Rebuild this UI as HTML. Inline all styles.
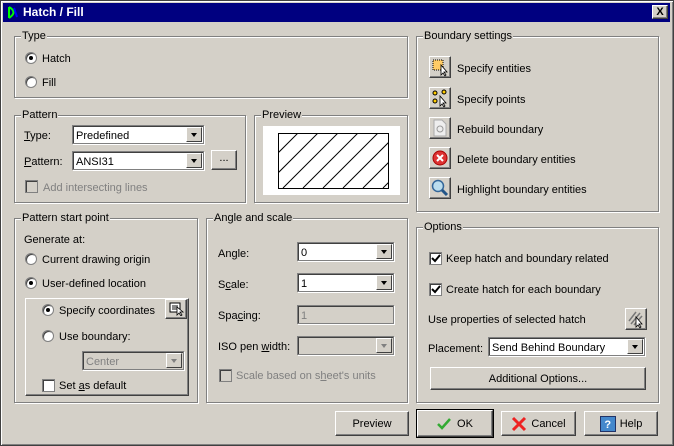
<!DOCTYPE html>
<html><head><meta charset="utf-8"><style>
*{box-sizing:border-box;margin:0;padding:0}
body{width:674px;height:446px;background:#d4d0c8;font:11px "Liberation Sans",sans-serif;color:#000;position:relative;overflow:hidden}
.a{position:absolute;white-space:nowrap}
span.a{margin-top:2px}
.win{position:absolute;left:0;top:0;width:674px;height:446px;border:1px solid #404040;box-shadow:inset 1px 1px #fff,inset -1px -1px #808080}
.title{position:absolute;left:3px;top:3px;width:667px;height:19px;background:#000080;color:#fff;font-weight:bold;font-size:12px}
.title span.a{margin-top:0}
.gb{position:absolute;border:1px solid #808080;box-shadow:inset 1px 1px #fff,1px 1px #fff}
.gb>span{position:absolute;top:-8px;left:6px;background:#d4d0c8;padding:0 1px;line-height:14px}
.radio{position:absolute;width:12px;height:12px;border-radius:50%;background:#fff;border:1px solid #808080;box-shadow:inset 1px 1px #404040}
.radio.on::after{content:"";position:absolute;left:3px;top:3px;width:4px;height:4px;border-radius:50%;background:#000}
.chk{position:absolute;width:13px;height:13px;background:#fff;border:1px solid #808080;box-shadow:inset 1px 1px #404040}
.chk.dis{background:#d4d0c8}
.combo{position:absolute;height:19px;background:#fff;border:1px solid #808080;box-shadow:inset 1px 1px #404040,1px 1px #fff;padding:3px 0 0 3px;line-height:14px}
.combo.dis{background:#d4d0c8;color:#808080}
.combo .arr{position:absolute;right:1px;top:1px;width:16px;height:15px;background:#d4d0c8;border:1px solid;border-color:#fff #404040 #404040 #fff}
.combo .arr::after{content:"";position:absolute;left:4px;top:5px;border:3px solid transparent;border-top:4px solid #000;border-bottom:0}
.combo.dis .arr::after{border-top-color:#808080}
.btn{position:absolute;background:#d4d0c8;border:1px solid;border-color:#fff #404040 #404040 #fff;box-shadow:inset -1px -1px #808080;text-align:center}
.gray{color:#808080}
</style></head><body>
<div class="win"></div>
<div class="title">
 <svg class="a" style="left:3px;top:2px" width="14" height="15"><path d="M3 2 L3 13 M3 2 Q12 7 3 13" stroke="#0f0" stroke-width="2" fill="none"/><path d="M8 3 L11 12" stroke="#00f" stroke-width="2"/></svg>
 <span class="a" style="left:20px;top:2px">Hatch / Fill</span>
 <div class="btn" style="left:649px;top:2px;width:16px;height:14px;color:#000;font-size:11px;line-height:12px">X</div>
</div>

<div class="gb" style="left:14px;top:36px;width:394px;height:62px"><span>Type</span></div>
<div class="radio on" style="left:25px;top:52px"></div><span class="a" style="left:42px;top:51px">Hatch</span>
<div class="radio" style="left:25px;top:76px"></div><span class="a" style="left:42px;top:75px">Fill</span>

<div class="gb" style="left:14px;top:115px;width:232px;height:88px"><span>Pattern</span></div>
<span class="a" style="left:24px;top:128px"><u>T</u>ype:</span>
<div class="combo" style="left:72px;top:125px;width:132px">Predefined<div class="arr"></div></div>
<span class="a" style="left:24px;top:154px"><u>P</u>attern:</span>
<div class="combo" style="left:72px;top:151px;width:132px">ANSI31<div class="arr"></div></div>
<div class="btn" style="left:211px;top:150px;width:26px;height:20px;line-height:15px">...</div>
<div class="chk dis" style="left:25px;top:180px"></div><span class="a gray" style="left:43px;top:180px">Add intersecting lines</span>

<div class="gb" style="left:254px;top:115px;width:154px;height:88px"><span>Preview</span></div>
<svg class="a" style="left:263px;top:126px" width="137" height="69"><rect width="137" height="69" fill="#fff"/>
<g stroke="#000" stroke-width="1" fill="none"><rect x="15.5" y="7.5" width="110" height="55"/>
<clipPath id="c"><rect x="16" y="8" width="109" height="54"/></clipPath>
<g clip-path="url(#c)"><path d="M0 62 L55 7 M20 62 L75 7 M40 62 L95 7 M60 62 L115 7 M80 62 L135 7 M100 62 L155 7 M120 62 L175 7 M-20 62 L35 7"/></g></g></svg>

<div class="gb" style="left:14px;top:218px;width:184px;height:185px"><span>Pattern start point</span></div>
<span class="a" style="left:24px;top:232px">Generate at:</span>
<div class="radio" style="left:25px;top:253px"></div><span class="a" style="left:42px;top:252px">Current drawing origin</span>
<div class="radio on" style="left:25px;top:277px"></div><span class="a" style="left:42px;top:276px">User-defined location</span>
<div class="a" style="left:25px;top:298px;width:164px;height:98px;border:1px solid;border-color:#fff #404040 #404040 #fff;box-shadow:inset -1px -1px #808080"></div>
<div class="radio on" style="left:42px;top:304px"></div><span class="a" style="left:59px;top:303px">Specify coordinates</span>
<div class="btn" style="left:165px;top:299px;width:22px;height:20px"><svg width="18" height="16"><rect x="3" y="3" width="10" height="9" fill="#fff" stroke="#000"/><rect x="5" y="5" width="6" height="5" fill="#888"/><path d="M10 7 L10 15 L12 13 L14 16 L15 15 L13 12 L16 12 Z" fill="#fff" stroke="#000" stroke-width=".8"/></svg></div>
<div class="radio" style="left:42px;top:330px"></div><span class="a" style="left:59px;top:329px">Use boundary:</span>
<div class="combo dis" style="left:82px;top:351px;width:102px">Center<div class="arr"></div></div>
<div class="chk" style="left:42px;top:379px"></div><span class="a" style="left:59px;top:378px">Set <u>a</u>s default</span>

<div class="gb" style="left:206px;top:218px;width:202px;height:185px"><span>Angle and scale</span></div>
<span class="a" style="left:218px;top:246px">An<u>g</u>le:</span>
<div class="combo" style="left:297px;top:242px;width:97px">0<div class="arr"></div></div>
<span class="a" style="left:218px;top:277px">S<u>c</u>ale:</span>
<div class="combo" style="left:297px;top:273px;width:97px">1<div class="arr"></div></div>
<span class="a" style="left:218px;top:308px">Spa<u>c</u>ing:</span>
<div class="combo dis" style="left:297px;top:305px;width:97px">1</div>
<span class="a" style="left:218px;top:339px">ISO pen <u>w</u>idth:</span>
<div class="combo dis" style="left:297px;top:336px;width:97px"><div class="arr"></div></div>
<div class="chk dis" style="left:219px;top:369px"></div><span class="a gray" style="left:236px;top:368px">Scale based on s<u>h</u>eet's units</span>

<div class="gb" style="left:416px;top:36px;width:243px;height:176px"><span>Boundary settings</span></div>
<div class="btn" style="left:429px;top:56px;width:22px;height:22px"><svg width="20" height="20"><rect x="3" y="3" width="10" height="10" fill="#fc6" stroke="#000" stroke-dasharray="1 1"/><path d="M11 8 L11 18 L13 16 L15 19 L16 18 L14 15 L17 15 Z" fill="#fff" stroke="#000" stroke-width=".8"/></svg></div>
<span class="a" style="left:457px;top:61px">Specify entities</span>
<div class="btn" style="left:429px;top:87px;width:22px;height:22px"><svg width="20" height="20"><circle cx="5" cy="5" r="2" fill="#fc0" stroke="#000"/><circle cx="14" cy="4" r="2" fill="#fc0" stroke="#000"/><circle cx="5" cy="13" r="2" fill="#fc0" stroke="#000"/><path d="M10 8 L10 18 L12 16 L14 19 L15 18 L13 15 L16 15 Z" fill="#fff" stroke="#000" stroke-width=".8"/></svg></div>
<span class="a" style="left:457px;top:92px">Specify points</span>
<div class="btn" style="left:429px;top:117px;width:22px;height:22px"><svg width="20" height="20"><path d="M4 2 L12 2 L16 6 L16 18 L4 18 Z" fill="#eee" stroke="#aaa"/><circle cx="10" cy="11" r="3" fill="none" stroke="#999"/></svg></div>
<span class="a" style="left:457px;top:122px">Rebuild boundary</span>
<div class="btn" style="left:429px;top:147px;width:22px;height:22px"><svg width="20" height="20"><circle cx="10" cy="10" r="7" fill="#d33" stroke="#a00"/><path d="M7 7 L13 13 M13 7 L7 13" stroke="#fff" stroke-width="2"/></svg></div>
<span class="a" style="left:457px;top:152px">Delete boundary entities</span>
<div class="btn" style="left:429px;top:177px;width:22px;height:22px"><svg width="20" height="20"><circle cx="8" cy="8" r="5.5" fill="#bde" stroke="#369" stroke-width="1.5"/><path d="M12 12 L17 17" stroke="#258" stroke-width="3"/></svg></div>
<span class="a" style="left:457px;top:182px">Highlight boundary entities</span>

<div class="gb" style="left:416px;top:227px;width:243px;height:176px"><span>Options</span></div>
<div class="chk" style="left:429px;top:252px"><svg class="a" style="left:1px;top:1px" width="10" height="10"><path d="M1 4 L4 7 L9 1" stroke="#000" stroke-width="2" fill="none"/></svg></div>
<span class="a" style="left:446px;top:251px">Keep hatch and boundary related</span>
<div class="chk" style="left:429px;top:283px"><svg class="a" style="left:1px;top:1px" width="10" height="10"><path d="M1 4 L4 7 L9 1" stroke="#000" stroke-width="2" fill="none"/></svg></div>
<span class="a" style="left:446px;top:282px">Create hatch for each boundary</span>
<span class="a" style="left:428px;top:312px">Use properties of selected hatch</span>
<div class="btn" style="left:625px;top:308px;width:22px;height:22px"><svg width="20" height="20"><path d="M3 12 L10 3 M5 15 L14 4 M8 16 L16 7" stroke="#777" stroke-width="1.5"/><path d="M10 8 L10 18 L12 16 L14 19 L15 18 L13 15 L16 15 Z" fill="#fff" stroke="#000" stroke-width=".8"/></svg></div>
<span class="a" style="left:428px;top:341px">Placement:</span>
<div class="combo" style="left:488px;top:337px;width:157px">Send Behind Boundary<div class="arr"></div></div>
<div class="btn" style="left:430px;top:367px;width:216px;height:23px;line-height:22px">Additional Options...</div>

<div class="btn" style="left:335px;top:411px;width:74px;height:25px;line-height:24px">Preview</div>
<div class="btn" style="left:417px;top:410px;width:76px;height:27px;line-height:26px;outline:1px solid #000"><svg style="vertical-align:middle;margin-right:6px" width="14" height="12"><path d="M1 6 L5 10 L13 1" stroke="#3a3" stroke-width="2.5" fill="none"/></svg>OK</div>
<div class="btn" style="left:501px;top:411px;width:75px;height:25px;line-height:24px"><svg style="vertical-align:middle;margin-right:4px" width="16" height="16"><path d="M2 2 L14 14 M14 2 L2 14" stroke="#e22" stroke-width="3"/></svg>Cancel</div>
<div class="btn" style="left:584px;top:411px;width:74px;height:25px;line-height:24px"><span style="display:inline-block;width:16px;height:16px;background:#48c;color:#fff;font-weight:bold;line-height:16px;vertical-align:middle;margin-right:4px;border:1px solid #236">?</span>Help</div>
</body></html>
